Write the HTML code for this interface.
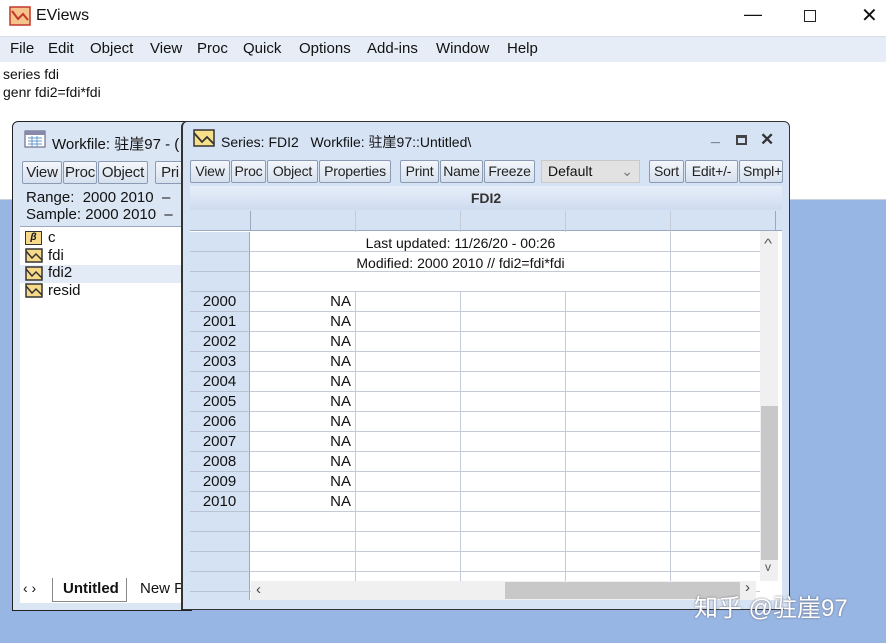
<!DOCTYPE html>
<html><head><meta charset="utf-8"><style>
*{box-sizing:border-box;margin:0;padding:0}
body{width:886px;height:643px;position:relative;overflow:hidden;background:#97b6e4;font-family:"Liberation Sans","Noto Sans CJK SC",sans-serif;font-size:14px;color:#111}
.abs{position:absolute}
.btn{position:absolute;height:23px;border:1px solid #8a9bb3;background:linear-gradient(#f4f7fb,#d6e0ee);font-size:14px;line-height:21px;text-align:center;color:#222;border-radius:2px;letter-spacing:-0.2px}
.rh{position:absolute;left:0;width:60px;height:20px;background:#d5e2f3;border-bottom:1px solid #b9c3d3;border-right:1px solid #9aa9bf;text-align:center;font-size:15px;line-height:20px}
.vl{position:absolute;top:0;width:1px;background:#c4cbd6}
.m{position:absolute;top:40px;font-size:15px}
</style></head><body>
<div class="abs" style="left:0;top:0;width:886px;height:36px;background:#fff"></div>
<svg class="abs" style="left:9px;top:6px" width="22" height="20"><rect x="1" y="1" width="20" height="18" fill="#f6c38c" stroke="#c0392b" stroke-width="1.5"/><path d="M3 5 L9 13 L14 8 L19 14" fill="none" stroke="#c0392b" stroke-width="2"/></svg>
<div class="abs" style="left:36px;top:7px;font-size:16px">EViews</div>
<div class="abs" style="left:744px;top:4px;font-size:18px">—</div>
<div class="abs" style="left:804px;top:10px;width:12px;height:12px;border:1px solid #222"></div>
<div class="abs" style="left:861px;top:3px;font-size:20px;font-weight:300">✕</div>
<div class="abs" style="left:0;top:36px;width:886px;height:26px;background:#e6edf7;border-top:1px solid #d5deea"></div>
<div class="m" style="left:10px">File</div><div class="m" style="left:48px">Edit</div><div class="m" style="left:90px">Object</div><div class="m" style="left:150px">View</div><div class="m" style="left:197px">Proc</div><div class="m" style="left:243px">Quick</div><div class="m" style="left:299px">Options</div><div class="m" style="left:367px">Add-ins</div><div class="m" style="left:436px">Window</div><div class="m" style="left:507px">Help</div>
<div class="abs" style="left:0;top:62px;width:886px;height:138px;background:#fff;border-bottom:1px solid #c9d2de"></div>
<div class="abs" style="left:3px;top:65px;font-size:14px;line-height:18px">series fdi<br>genr fdi2=fdi*fdi</div>
<!-- workfile window -->
<div class="abs" style="left:12px;top:121px;width:180px;height:490px;background:#dbe6f4;border:1px solid #222;border-radius:6px 0 0 0"></div>
<svg class="abs" style="left:24px;top:130px" width="22" height="18"><rect x="1" y="1" width="20" height="16" fill="#fff" stroke="#557" /><rect x="1" y="1" width="20" height="4" fill="#88a"/><path d="M4 8h14M4 11h14M4 14h14M8 6v11M13 6v11" stroke="#69c" stroke-width="1"/></svg>
<div class="abs" style="left:52px;top:133px;font-size:15px">Workfile: 驻崖97 - (</div>
<div class="btn" style="left:22px;top:161px;width:40px;font-size:15px">View</div>
<div class="btn" style="left:63px;top:161px;width:34px;font-size:15px">Proc</div>
<div class="btn" style="left:98px;top:161px;width:50px;font-size:15px">Object</div>
<div class="btn" style="left:155px;top:161px;width:30px;font-size:15px">Pri</div>
<div class="abs" style="left:26px;top:189px;font-size:15px;line-height:17px">Range:&nbsp; 2000 2010 &nbsp;–<br>Sample: 2000 2010 &nbsp;–</div>
<div class="abs" style="left:20px;top:226px;width:165px;height:353px;background:#fff;border-top:1px solid #9aa9bf"></div>
<div class="abs" style="left:20px;top:265px;width:165px;height:18px;background:#e3ebf6"></div>
<div class="abs" style="left:25px;top:231px;width:17px;height:14px;background:#f7d98a;border:1.5px solid #333;font-size:10px;font-weight:bold;font-style:italic;text-align:center;line-height:11px">β</div>
<svg class="abs" style="left:25px;top:248px" width="18" height="50"><g fill="#f7d98a" stroke="#333" stroke-width="1.5"><rect x="1" y="1" width="16" height="13"/><rect x="1" y="19" width="16" height="13"/><rect x="1" y="36" width="16" height="13"/></g><g fill="none" stroke="#333" stroke-width="1.5"><path d="M1 3l6 7 4-4 6 6"/><path d="M1 21l6 7 4-4 6 6"/><path d="M1 38l6 7 4-4 6 6"/></g></svg>
<div class="abs" style="left:48px;top:229px;font-size:15px;line-height:17.5px">c<br>fdi<br>fdi2<br>resid</div>
<div class="abs" style="left:20px;top:579px;width:165px;height:24px;background:#fff"></div>
<div class="abs" style="left:23px;top:580px;font-size:14px">‹ ›</div>
<div class="abs" style="left:52px;top:578px;width:75px;height:24px;background:#fff;border:1px solid #888;border-top:none;font-weight:bold;font-size:15px;padding-left:10px;line-height:22px">Untitled</div>
<div class="abs" style="left:140px;top:580px;font-size:15px">New P</div>
<!-- series window -->
<div class="abs" style="left:181px;top:121px;width:609px;height:489px;background:#d6e3f4;border:1px solid #333;border-left:2px solid #333;border-radius:6px 6px 0 0"></div>
<svg class="abs" style="left:193px;top:129px" width="22" height="18"><rect x="1" y="1" width="20" height="16" fill="#f7e08a" stroke="#333" stroke-width="1.5"/><path d="M1 4l8 9 5-5 7 7" fill="none" stroke="#333" stroke-width="1.8"/></svg>
<div class="abs" style="left:221px;top:132px;font-size:14px">Series: FDI2&nbsp;&nbsp; Workfile: 驻崖97::Untitled\</div>
<div class="abs" style="left:711px;top:128px;font-size:16px;font-weight:bold;color:#333">_</div>
<div class="abs" style="left:736px;top:135px;width:11px;height:10px;border:2px solid #444;border-top-width:3px"></div>
<div class="abs" style="left:760px;top:130px;font-size:17px;font-weight:bold;color:#333">✕</div>
<div class="btn" style="left:190px;top:160px;width:40px">View</div>
<div class="btn" style="left:231px;top:160px;width:35px">Proc</div>
<div class="btn" style="left:267px;top:160px;width:51px">Object</div>
<div class="btn" style="left:319px;top:160px;width:72px">Properties</div>
<div class="btn" style="left:400px;top:160px;width:39px">Print</div>
<div class="btn" style="left:440px;top:160px;width:43px">Name</div>
<div class="btn" style="left:484px;top:160px;width:51px">Freeze</div>
<div class="abs" style="left:541px;top:160px;width:99px;height:23px;background:#e2e2e2;border:1px solid #c9c9c9;font-size:14px;line-height:21px;padding-left:6px">Default<span style="position:absolute;right:6px;color:#777">⌄</span></div>
<div class="btn" style="left:649px;top:160px;width:35px">Sort</div>
<div class="btn" style="left:685px;top:160px;width:53px">Edit+/-</div>
<div class="btn" style="left:739px;top:160px;width:44px;text-align:left;padding-left:3px">Smpl+</div>
<div class="abs" style="left:190px;top:186px;width:592px;height:24px;background:linear-gradient(#e6eef9,#cfdcef);text-align:center;font-weight:bold;font-size:14px;line-height:24px;color:#333">FDI2</div>
<div class="abs" style="left:190px;top:211px;width:592px;height:389px;background:#fff;overflow:hidden">
 <div class="abs" style="left:0;top:0;width:592px;height:20px;background:#d5e2f3;border-bottom:1px solid #9aa9bf"></div>
 <div class="vl" style="left:60px;height:20px;background:#9aa9bf"></div>
 <div class="vl" style="left:165px;height:370px"></div>
 <div class="vl" style="left:270px;height:370px"></div>
 <div class="vl" style="left:375px;height:370px"></div>
 <div class="vl" style="left:480px;height:370px"></div>
 <div class="vl" style="left:585px;height:20px;background:#9aa9bf"></div>
 <div class="abs" style="left:61px;top:21px;width:419px;height:59px;background:#fff"></div>
 <div id="rows"></div>
 <div class="abs" style="left:61px;top:22px;width:419px;text-align:center;font-size:14px;line-height:20px">Last updated: 11/26/20 - 00:26<br>Modified: 2000 2010 // fdi2=fdi*fdi</div>
 <div class="abs" style="left:570px;top:20px;width:18px;height:350px;background:#f0f0f0"></div>
 <div class="abs" style="left:571px;top:195px;width:17px;height:154px;background:#c8c8c8"></div>
 <div class="abs" style="left:575px;top:25px;font-size:13px;color:#555;transform:scaleX(1.3)">^</div>
 <div class="abs" style="left:575px;top:349px;font-size:12px;color:#555">v</div>
 <div class="abs" style="left:61px;top:370px;width:505px;height:19px;background:#f0f0f0"></div>
 <div class="abs" style="left:315px;top:371px;width:235px;height:17px;background:#c8c8c8"></div>
 <div class="abs" style="left:66px;top:370px;font-size:15px;color:#444">‹</div>
 <div class="abs" style="left:555px;top:368px;font-size:15px;color:#444">›</div>
</div>
<script>
var h='',y=['','','','2000','2001','2002','2003','2004','2005','2006','2007','2008','2009','2010','','','','',''];
for(var i=0;i<y.length;i++){var t=21+i*20;
h+='<div class="rh" style="top:'+t+'px">'+y[i]+'</div>';
h+='<div class="abs" style="left:60px;top:'+t+'px;width:510px;height:20px;border-bottom:1px solid #c4cbd6"></div>';
if(y[i])h+='<div class="abs" style="left:61px;top:'+t+'px;width:100px;text-align:right;font-size:15px;line-height:20px">NA</div>';}
document.getElementById('rows').innerHTML=h;
</script>
<div class="abs" style="left:694px;top:588px;font-size:24px;color:#fff;text-shadow:0 0 2px #667">知乎 @驻崖97</div>
</body></html>
